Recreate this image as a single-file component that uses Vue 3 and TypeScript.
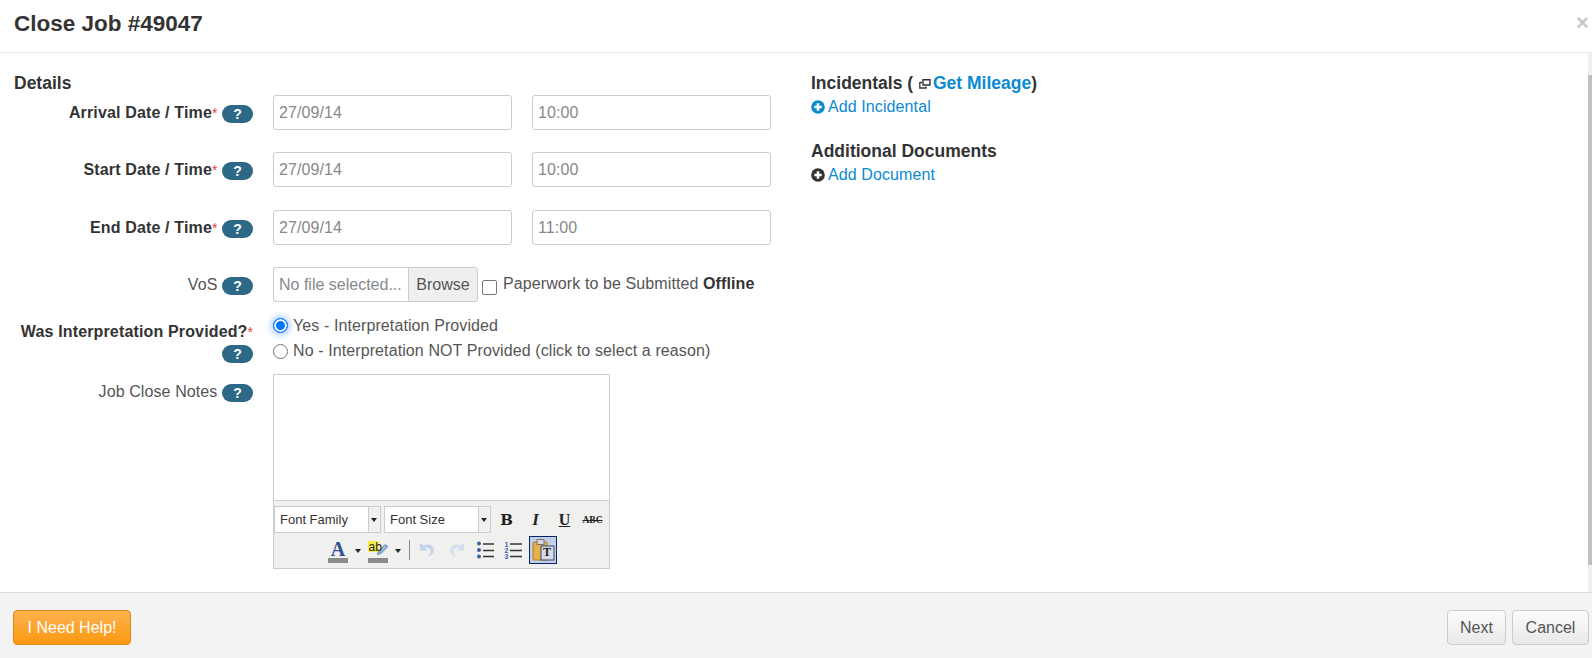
<script setup lang="ts">
interface DateRow { label: string; date: string; time: string }
const rows: DateRow[] = [
  { label: 'Arrival Date / Time', date: '27/09/14', time: '10:00' },
  { label: 'Start Date / Time', date: '27/09/14', time: '10:00' },
  { label: 'End Date / Time', date: '27/09/14', time: '11:00' },
]
</script>

<template>
  <div class="modal">
    <header class="head">
      <h3>Close Job #49047</h3>
      <span class="close">×</span>
    </header>
    <main class="body">
      <section class="left">
        <h4 class="section-title">Details</h4>
        <div v-for="r in rows" :key="r.label" class="row">
          <div class="lbl strong">{{ r.label }}<i>*</i> <span class="help">?</span></div>
          <div class="ctrl two">
            <div class="input">{{ r.date }}</div>
            <div class="input">{{ r.time }}</div>
          </div>
        </div>
        <div class="row file-row">
          <div class="lbl">VoS <span class="help">?</span></div>
          <div class="ctrl file">
            <div class="file-name">No file selected...</div>
            <div class="browse">Browse</div>
            <span class="check"></span>
            <span class="check-text">Paperwork to be Submitted <b>Offline</b></span>
          </div>
        </div>
        <div class="row radios-row">
          <div class="lbl strong wrap">Was Interpretation Provided?<i>*</i><span class="help block">?</span></div>
          <div class="ctrl radios">
            <div class="radio-line"><span class="radio on"></span>Yes - Interpretation Provided</div>
            <div class="radio-line"><span class="radio"></span>No - Interpretation NOT Provided (click to select a reason)</div>
          </div>
        </div>
        <div class="row notes-row">
          <div class="lbl">Job Close Notes <span class="help">?</span></div>
          <div class="editor">
            <div class="edit-area"></div>
            <div class="toolbar">
              <div class="tb-line first">
                <div class="select fam"><span>Font Family</span><em></em></div>
                <div class="select size"><span>Font Size</span><em></em></div>
                <span class="glyph b">B</span>
                <span class="glyph it">I</span>
                <span class="glyph u">U</span>
                <span class="glyph abc">ABC</span>
              </div>
              <div class="tb-line second">
                <div class="colour"><span class="a">A</span><u></u></div><em class="drop"></em>
                <div class="colour hl">
                  <svg width="20" height="16" viewBox="0 0 20 16">
                    <rect x="0" y="0" width="11" height="11" fill="#f2ee4e" />
                    <path d="M10 11 L17 3.500 L20 5.500 L13 12.500 L9.500 13.500 Z" fill="#8fb3dc" stroke="#5d82b0" stroke-width=".8" />
                    <text x="0.500" y="9.500" font-size="12" font-family="Liberation Sans, sans-serif" fill="#222">ab</text>
                  </svg>
                  <u></u>
                </div><em class="drop second-drop"></em>
                <span class="sep"></span>
                <svg class="ic undo" width="18" height="18" viewBox="0 0 18 18"><path d="M2 2 V9.500 H9.500 L7 7 C9.500 6 12.500 7.200 12.500 10 C12.500 12 11.500 14 9.500 15.500 C13.500 15 16 12 16 9 C16 4.500 10.500 1.800 5.500 4.500 Z" fill="#c3d5ea" /></svg>
                <svg class="ic redo" width="18" height="18" viewBox="0 0 18 18"><path d="M16 2 V9.500 H8.500 L11 7 C8.500 6 5.500 7.200 5.500 10 C5.500 12 6.500 14 8.500 15.500 C4.500 15 2 12 2 9 C2 4.500 7.500 1.800 12.500 4.500 Z" fill="#d3dfee" /></svg>
                <svg class="ic bullets" width="18" height="18" viewBox="0 0 18 18">
                  <circle cx="3" cy="2.500" r="2" fill="#3c5f9e" /><circle cx="3" cy="9" r="2" fill="#3c5f9e" /><circle cx="3" cy="15.500" r="2" fill="#3c5f9e" />
                  <path d="M7 3 H18 M7 9.500 H18 M7 15.500 H18" stroke="#333" stroke-width="1.300" />
                </svg>
                <svg class="ic nums" width="18" height="18" viewBox="0 0 18 18">
                  <text x="0.500" y="5.500" font-size="7" font-weight="700" font-family="Liberation Sans, sans-serif" fill="#3c5fb0">1</text>
                  <text x="0.500" y="11.500" font-size="7" font-weight="700" font-family="Liberation Sans, sans-serif" fill="#3c5fb0">2</text>
                  <text x="0.500" y="17.500" font-size="7" font-weight="700" font-family="Liberation Sans, sans-serif" fill="#3c5fb0">3</text>
                  <path d="M6 3 H18 M6 9.500 H18 M6 15.500 H18" stroke="#333" stroke-width="1.300" />
                </svg>
                <span class="paste">
                  <svg width="26" height="26" viewBox="0 0 26 26">
                    <rect x="3" y="5" width="14" height="18" rx="1" fill="#e8b04a" stroke="#a87c30" />
                    <rect x="7" y="2.500" width="7" height="5" fill="#d8d8d8" stroke="#777" />
                    <rect x="11" y="9" width="13" height="14" fill="#d6dbe4" stroke="#38486a" />
                  </svg>
                  <span class="t">T</span>
                </span>
              </div>
            </div>
          </div>
        </div>
      </section>
      <aside class="right">
        <div class="group">
          <h4 class="section-title">Incidentals (
            <svg class="ext" width="12" height="10" viewBox="0 0 12 10"><path d="M4 .8 H11 V6 H4 Z" fill="none" stroke="#333" stroke-width="1.400" /><path d="M1 3.500 H3 M.8 3 V9 H7 V7.500" fill="none" stroke="#333" stroke-width="1.300" /></svg>
            <a class="mileage">Get Mileage</a>)</h4>
          <a class="add">
            <svg width="14" height="14" viewBox="0 0 14 14"><circle cx="7" cy="7" r="6.800" fill="#0a8ad1" /><path d="M3.300 7 H10.700 M7 3.300 V10.700" stroke="#fff" stroke-width="2.600" /></svg>
            <span>Add Incidental</span></a>
        </div>
        <div class="group second-group">
          <h4 class="section-title">Additional Documents</h4>
          <a class="add">
            <svg width="14" height="14" viewBox="0 0 14 14"><circle cx="7" cy="7" r="6.800" fill="#333" /><path d="M3.300 7 H10.700 M7 3.300 V10.700" stroke="#fff" stroke-width="2.600" /></svg>
            <span>Add Document</span></a>
        </div>
      </aside>
      <div class="scroll"><div class="thumb"></div></div>
    </main>
    <footer class="foot">
      <button class="btn help-btn">I Need Help!</button>
      <div class="actions">
        <button class="btn next">Next</button>
        <button class="btn cancel">Cancel</button>
      </div>
    </footer>
  </div>
</template>

<style>
html, body { margin: 0; background: #fff; }
</style>

<style scoped>
.modal {
  width: 1592px;
  height: 658px;
  display: flex;
  flex-direction: column;
  font-family: "Liberation Sans", Arial, sans-serif;
  font-size: 16px;
  letter-spacing: .1px;
  color: #333;
  overflow: hidden;
}
.head {
  height: 53px;
  flex: none;
  box-sizing: border-box;
  border-bottom: 1px solid #e8e8e8;
  display: flex;
  align-items: center;
  justify-content: space-between;
  padding: 0 0 0 14px;
}
.head h3 {
  margin: -5px 0 0;
  font-size: 22.500px;
  line-height: 30px;
  font-weight: 700;
  letter-spacing: 0;
}
.close {
  font-size: 22px;
  font-weight: 700;
  color: #c8c8c8;
  margin: -7px 3px 0 0;
}
.body {
  height: 539px;
  flex: none;
  display: flex;
  box-sizing: border-box;
  padding: 19px 0 0 14px;
}
.left { width: 757px; flex: none; }
.section-title {
  margin: 0;
  font-size: 17.500px;
  line-height: 23px;
  font-weight: 700;
  color: #333;
  letter-spacing: 0;
}
.row {
  display: flex;
  margin-bottom: 22.330px;
}
.lbl {
  width: 239px;
  text-align: right;
  line-height: 35px;
  margin-right: 20px;
  flex: none;
  height: 35px;
  white-space: nowrap;
}
.lbl i { color: #f04040; font-style: normal; font-size: 14px; font-weight: 400; letter-spacing: 0; }
.strong { font-weight: 700; letter-spacing: .15px; }
.help {
  display: inline-block;
  width: 31px;
  height: 18px;
  background: #2d6987;
  border-radius: 9px;
  color: #fff;
  font-size: 14px;
  line-height: 18px;
  font-weight: 700;
  text-align: center;
  vertical-align: -1px;
}
.ctrl.two { display: flex; gap: 20px; }
.input {
  width: 239px;
  height: 35px;
  box-sizing: border-box;
  border: 1px solid #ccc;
  border-radius: 3px;
  padding: 0 5px;
  line-height: 33px;
  color: #888;
}
.file-row { margin-bottom: 10px; }
.file { display: flex; align-items: center; height: 35px; }
.file-name {
  width: 135px;
  height: 35px;
  box-sizing: border-box;
  border: 1px solid #ccc;
  border-right: 0;
  border-radius: 3px 0 0 3px;
  padding-left: 5px;
  line-height: 33px;
  color: #888;
  white-space: nowrap;
  overflow: hidden;
  letter-spacing: 0;
}
.browse {
  width: 70px;
  height: 35px;
  box-sizing: border-box;
  border: 1px solid #ccc;
  border-radius: 0 3px 3px 0;
  background: #efefef;
  text-align: center;
  line-height: 33px;
  color: #555;
  letter-spacing: 0;
}
.check {
  width: 13px;
  height: 13px;
  border: 1px solid #767676;
  border-radius: 2px;
  margin: 6px 6px 0 4px;
  background: #fff;
  flex: none;
}
.check-text { color: #555; white-space: nowrap; }
.check-text b { color: #333; }
.radios-row { margin-bottom: 0; height: 62px; }
.radios-row .lbl { height: 54px; padding-top: 8px; line-height: 24px; }
.help.block { display: block; margin: 1px 0 0 auto; }
.radios { display: flex; flex-direction: column; padding-top: 1px; }
.radio-line { display: flex; align-items: center; height: 25.500px; color: #555; white-space: nowrap; }
.radio {
  width: 13px;
  height: 13px;
  border: 1px solid #767676;
  border-radius: 50%;
  margin-right: 5px;
  background: #fff;
  flex: none;
}
.radio.on {
  border-color: #0075ff;
  background: #0075ff;
  box-shadow: inset 0 0 0 2px #fff, 0 0 6px 2px rgba(60, 140, 255, .45);
}
.notes-row { margin: 0; }
.notes-row .lbl, .file-row .lbl { color: #555; }
.editor {
  width: 337px;
  height: 195px;
  box-sizing: border-box;
  border: 1px solid #ccc;
  display: flex;
  flex-direction: column;
}
.edit-area { height: 125px; flex: none; border-bottom: 1px solid #ccc; background: #fff; }
.toolbar { flex: 1; background: #f0f0ee; letter-spacing: 0; }
.tb-line { display: flex; align-items: center; box-sizing: border-box; }
.tb-line.first { height: 34px; padding-top: 4px; }
.tb-line.second { height: 33px; padding: 0 0 3px 54px; }
.select {
  height: 27px;
  box-sizing: border-box;
  background: #fff;
  border: 1px solid #ccc;
  display: flex;
  align-items: center;
  font-size: 13px;
  padding-left: 5px;
  position: relative;
  color: #333;
}
.select em {
  position: absolute;
  right: 0;
  top: 0;
  bottom: 0;
  width: 11px;
  background: #f0f0ee;
  border-left: 1px solid #ccc;
}
.select em::after, .drop::after {
  content: "";
  position: absolute;
  top: 11px;
  left: 2px;
  border: 3px solid transparent;
  border-top: 4px solid #222;
  border-bottom: 0;
}
.fam { width: 107px; margin-right: 3px; }
.size { width: 107px; margin-right: 1px; }
.glyph { width: 29px; text-align: center; font-family: "Liberation Serif", serif; font-weight: 700; color: #222; font-size: 16px; }
.glyph.b { font-family: "DejaVu Serif", serif; font-size: 15px; }
.glyph.it { font-size: 17px; font-style: italic; }
.glyph.abc { font-size: 9.500px; text-decoration: line-through; width: 27px; }
.glyph.u { text-decoration: underline; }
.colour { width: 20px; height: 26px; position: relative; text-align: center; flex: none; line-height: 20px; }
.colour u {
  position: absolute;
  left: 0;
  right: 0;
  bottom: 0;
  height: 5px;
  background: #8a8a8a;
}
.colour .a { display: block; padding-top: 2px; font-family: "Liberation Serif", serif; font-weight: 700; font-size: 20px; line-height: 20px; color: #2f4f96; }
.colour.hl svg { position: absolute; left: 0; top: 4px; }
.drop { position: relative; width: 20px; height: 24px; flex: none; }
.drop::after { top: 11px; left: 7px; }
.second-drop { width: 21px; }
.sep { width: 1px; height: 20px; background: #8a8a8a; margin-right: 8px; flex: none; }
.ic { flex: none; margin-right: 12px; }
.ic.redo { margin-right: 10px; }
.ic.bullets { margin-right: 10px; }
.ic.nums { margin-right: 7px; }
.paste {
  width: 28px;
  height: 28px;
  box-sizing: border-box;
  border: 1px solid #0a246a;
  background: #c2cfe5;
  position: relative;
  display: block;
  flex: none;
}
.paste svg { position: absolute; left: 0; top: 0; }
.paste .t { position: absolute; left: 13px; top: 9px; font: 700 12px/13px "Liberation Serif", serif; color: #222; }
.right { padding-left: 40px; width: 400px; }
.ext { margin: 0 2px 0 1px; vertical-align: 0; }
.mileage { color: #0a8ad1; }
.add { color: #0a8ad1; display: flex; align-items: center; gap: 3px; line-height: 24px; }
.second-group { margin-top: 21px; }
.second-group .add { line-height: 23px; }
.scroll {
  position: absolute;
  left: 1588px;
  top: 53px;
  width: 4px;
  height: 539px;
  background: #f0f0f0;
}
.thumb { margin-top: 22px; height: 490px; background: #c1c1c1; }
.foot {
  height: 66px;
  flex: none;
  box-sizing: border-box;
  border-top: 1px solid #ddd;
  background: #f3f3f3;
  display: flex;
  justify-content: space-between;
  align-items: flex-start;
  padding: 17px 3px 0 13px;
}
.actions { display: flex; gap: 6px; }
.btn {
  height: 35px;
  box-sizing: border-box;
  border-radius: 4px;
  border: 1px solid #ccc;
  background: linear-gradient(#fcfcfc, #e8e8e8);
  font-family: inherit;
  font-size: 16px;
  color: #555;
  padding: 0;
}
.next { width: 59px; }
.cancel { width: 77px; }
.help-btn {
  width: 118px;
  color: #fff;
  background: linear-gradient(#fdb24f, #fb9810);
  border-color: #dc8a1c;
}
</style>
